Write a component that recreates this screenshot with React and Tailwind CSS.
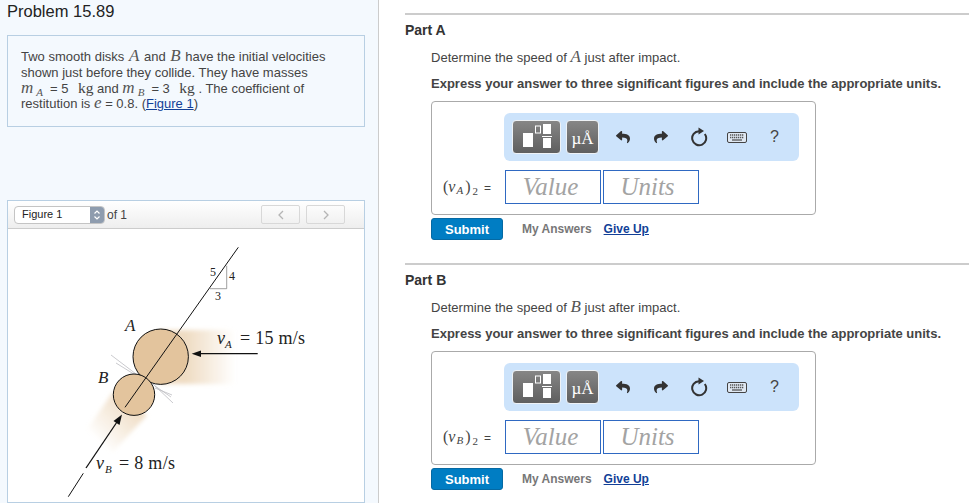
import { FaReply, FaShare } from 'react-icons/fa';

const M = ({ children }) => (
  <i className="font-['Liberation_Serif',serif] text-[17px] leading-[0] text-[#555]">{children}</i>
);

const Sub = ({ children }) => (
  <span className="relative top-[3px] font-['Liberation_Serif',serif] italic text-[11px] leading-[0] text-[#555] ml-[3px] mr-[7px]">{children}</span>
);

const Kg = () => (
  <span className="ml-[2px] font-['Liberation_Serif',serif] text-[15.5px] leading-[0]">&nbsp;kg</span>
);

const Toolbar = () => (
  <div className="ml-[72px] mt-[11px] w-[295px] h-[48px] rounded-[6px] bg-[#cce3fb] flex items-center pl-[8px]">
    <button className="w-[49px] h-[34px] rounded-[4px] border border-[#eef2f6] bg-gradient-to-b from-[#868686] to-[#5f5f5f] flex items-center justify-center">
      <svg width="32" height="28" viewBox="0 0 32 28">
        <rect x="2" y="10" width="10" height="14" fill="#fff" />
        <rect x="14.5" y="3" width="5" height="7" fill="none" stroke="#fff" strokeWidth="1" />
        <rect x="22" y="1" width="8" height="10" fill="#fff" />
        <rect x="21" y="13" width="10" height="1" fill="#fff" />
        <rect x="22" y="15" width="8" height="10" fill="#fff" />
      </svg>
    </button>
    <button className="ml-[5px] w-[33px] h-[34px] rounded-[4px] border border-[#eef2f6] bg-gradient-to-b from-[#868686] to-[#5f5f5f] text-white font-['Liberation_Serif',serif] text-[17px] leading-none pt-[3px]">
      µÅ
    </button>
    <FaReply className="ml-[17px] text-[#333]" size={14} />
    <FaShare className="ml-[24px] text-[#333]" size={14} />
    <svg className="ml-[22px]" width="18" height="20" viewBox="0 0 18 20">
      <path d="M9 4.2 A7 7 0 1 0 14.8 7" fill="none" stroke="#333" strokeWidth="2" />
      <path d="M8.5 0.5 L14 4 L8.5 7.5 Z" fill="#333" />
    </svg>
    <svg className="ml-[19px]" width="20" height="11" viewBox="0 0 20 11">
      <rect x="0.5" y="0.5" width="19" height="10" rx="1.5" fill="#dfe8f2" stroke="#444" />
      <path d="M3 3h14M3 5.5h14" stroke="#555" strokeWidth="1.3" strokeDasharray="1.3 .7" />
      <path d="M5 8h10" stroke="#555" strokeWidth="1.3" />
    </svg>
    <span className="ml-[23px] text-[16px] text-[#444] font-['Liberation_Sans',sans-serif]">?</span>
  </div>
);

const Part = ({ name, letter }) => (
  <section className="h-[250px] border-t-2 border-[#ccc] pt-[7px]">
    <h2 className="text-[14px] leading-[16px] font-bold text-[#333]">Part {name}</h2>
    <div className="ml-[26px]">
      <p className="mt-[10px] h-[20px] text-[13px] leading-[20px] text-[#444] tracking-[0.03px]">
        Determine the speed of <M>{letter}</M> just after impact.
      </p>
      <p className="mt-[8px] text-[13px] leading-[16px] font-bold text-[#444]">
        Express your answer to three significant figures and include the appropriate units.
      </p>
      <div className="mt-[9px] w-[385px] h-[114px] rounded-[4px] border border-[#aaa] bg-white">
        <Toolbar />
        <div className="mt-[9px] flex items-center">
          <span className="w-[73px] pl-[11px] whitespace-nowrap font-['Liberation_Serif',serif] text-[16px] leading-none text-[#444]">
            (<i>v</i><span className="relative top-[2px] italic text-[11px] leading-none ml-[1px] mr-[2px]">{letter}</span>)<span className="relative top-[3px] text-[11px] leading-none ml-[2px]">2</span>
            <span className="ml-[6px] font-['Liberation_Sans',sans-serif] text-[12px]">=</span>
          </span>
          <div className="w-[96px] h-[34px] border border-[#2f69c2] flex items-center justify-center pr-[5px] pb-[1px] font-['Liberation_Serif',serif] italic text-[25px] text-[#a3a3a3]">Value</div>
          <div className="ml-[2px] w-[96px] h-[34px] border border-[#2f69c2] flex items-center justify-center pr-[7px] pb-[1px] font-['Liberation_Serif',serif] italic text-[25px] text-[#a3a3a3]">Units</div>
        </div>
      </div>
      <div className="mt-[3px] flex items-center text-[12px] font-bold">
        <button className="w-[72px] h-[22px] rounded-[3px] border border-[#0569a3] bg-[#007dc3] text-white text-[13px] leading-none">Submit</button>
        <span className="ml-[19px] text-[#777]">My Answers</span>
        <a className="ml-[12px] text-[#123f97] underline">Give Up</a>
      </div>
    </div>
  </section>
);

const Figure = () => (
  <svg width="356" height="274" viewBox="8 229 356 274" className="block">
    <defs>
      <linearGradient id="trailA" x1="0" x2="1" y1="0" y2="0">
        <stop offset="0.35" stopColor="#efdcc3" />
        <stop offset="1" stopColor="#efdcc3" stopOpacity="0" />
      </linearGradient>
      <linearGradient id="trailB" x1="1" x2="0" y1="0" y2="1">
        <stop offset="0.2" stopColor="#efdcc3" />
        <stop offset="0.85" stopColor="#efdcc3" stopOpacity="0" />
      </linearGradient>
      <filter id="soft" x="-20%" y="-20%" width="140%" height="140%">
        <feGaussianBlur stdDeviation="2" />
      </filter>
    </defs>
    <path d="M160 330 H235 V384 H160 Z" fill="url(#trailA)" filter="url(#soft)" />
    <path d="M113 392 L147 415 L113 452 L88 428 Z" fill="url(#trailB)" filter="url(#soft)" />
    <g stroke="#bdbdc2" strokeWidth="0.8" fill="none">
      <path d="M111 355 L136 374M116 363 L137 376M135 361 L141 372" />
      <path d="M153 384 L173 403M155 386 L171 397M155 388 L172 395" />
    </g>
    <circle cx="160.7" cy="356.7" r="27.7" fill="#e3c49d" stroke="#111" strokeWidth="1" />
    <circle cx="134" cy="394.7" r="20.7" fill="#e3c49d" stroke="#111" strokeWidth="1" />
    <path d="M238.3 247.3 L125 407.3" stroke="#111" strokeWidth="1" />
    <path d="M83.3 473.3 L68.3 496.7" stroke="#111" strokeWidth="1" />
    <path d="M86 468 L119 419" stroke="#111" strokeWidth="1.3" />
    <path d="M122 414.5 L113.5 421 L119.5 425 Z" fill="#111" />
    <path d="M257.7 353.7 H198" stroke="#111" strokeWidth="1.3" />
    <path d="M191.7 353.7 L201 350.5 V357 Z" fill="#111" />
    <path d="M210 288.7 H226.7 V265.7" fill="none" stroke="#777" strokeWidth="0.7" />
    <g fill="#222" fontFamily="Liberation Serif, serif">
      <text x="210" y="276" fontSize="12">5</text>
      <text x="229" y="280" fontSize="12">4</text>
      <text x="215" y="300" fontSize="12">3</text>
      <text x="125" y="331" fontSize="17" fontStyle="italic">A</text>
      <text x="98" y="383" fontSize="17" fontStyle="italic">B</text>
      <text x="217" y="344" fontSize="18" fontStyle="italic">v</text>
      <text x="225" y="348" fontSize="11" fontStyle="italic">A</text>
      <text x="240" y="344" fontSize="18" letterSpacing="0.25">= 15 m/s</text>
      <text x="96" y="469" fontSize="18" fontStyle="italic">v</text>
      <text x="105" y="473" fontSize="11" fontStyle="italic">B</text>
      <text x="119" y="469" fontSize="18" letterSpacing="0.3">= 8 m/s</text>
    </g>
  </svg>
);

export default function App() {
  return (
    <div className="h-[503px] w-[969px] overflow-hidden flex bg-white font-['Liberation_Sans',sans-serif]">
      <aside className="w-[379px] shrink-0 bg-[#f4f9fe] border-r border-[#ccc] pl-[7px]">
        <h1 className="h-[35px] pt-[1px] text-[16.5px] leading-[20px] text-[#222]">Problem 15.89</h1>
        <div className="w-[358px] h-[92px] border border-[#b8cfe3] pl-[13px] pt-[13px] text-[13px] text-[#444] whitespace-nowrap [&>div]:h-[16px] [&>div]:leading-[16px]">
          <div>Two smooth disks <span className="mx-[1px]"><M>A</M></span> and <span className="mx-[1px]"><M>B</M></span> have the initial velocities</div>
          <div>shown just before they collide. They have masses</div>
          <div><M>m</M><Sub>A</Sub>= 5 <Kg /> and <M>m</M><Sub>B</Sub>= 3 <Kg /> . The coefficient of</div>
          <div className="-mt-[1px]">restitution is <M>e</M> = 0.8. (<a className="text-[#123f97] underline">Figure 1</a>)</div>
        </div>
        <div className="mt-[73px] w-[358px] h-[303px] border border-[#b8cfe3] bg-white">
          <div className="h-[28px] bg-gradient-to-b from-white to-[#eeeeee] border-b border-[#ccc] flex items-center pl-[6px] pr-[19px]">
            <div className="w-[91px] h-[18px] rounded-[4px] border border-[#c4c4c4] bg-white flex items-center justify-between text-[11px] text-[#222] overflow-hidden">
              <span className="pl-[7px]">Figure 1</span>
              <span className="w-[14px] h-full bg-[#8e9cae] flex items-center justify-center">
                <svg width="8" height="12" viewBox="0 0 8 12">
                  <path d="M1.5 4.5 L4 2 L6.5 4.5M1.5 7.5 L4 10 L6.5 7.5" fill="none" stroke="#fff" strokeWidth="1.2" />
                </svg>
              </span>
            </div>
            <span className="ml-[2px] text-[12px] text-[#444] whitespace-nowrap">of 1</span>
            <button className="ml-auto w-[39px] h-[19px] rounded-[2px] border border-[#d8d8d8] flex items-center justify-center">
              <svg width="8" height="10" viewBox="0 0 8 10"><path d="M6 1 L2 5 L6 9" fill="none" stroke="#b5b5b5" strokeWidth="1.3" /></svg>
            </button>
            <button className="ml-[6px] w-[39px] h-[19px] rounded-[2px] border border-[#d8d8d8] flex items-center justify-center">
              <svg width="8" height="10" viewBox="0 0 8 10"><path d="M2 1 L6 5 L2 9" fill="none" stroke="#b5b5b5" strokeWidth="1.3" /></svg>
            </button>
          </div>
          <Figure />
        </div>
      </aside>
      <main className="flex-1 pl-[26px] pt-[13px]">
        <Part name="A" letter="A" />
        <Part name="B" letter="B" />
      </main>
    </div>
  );
}
